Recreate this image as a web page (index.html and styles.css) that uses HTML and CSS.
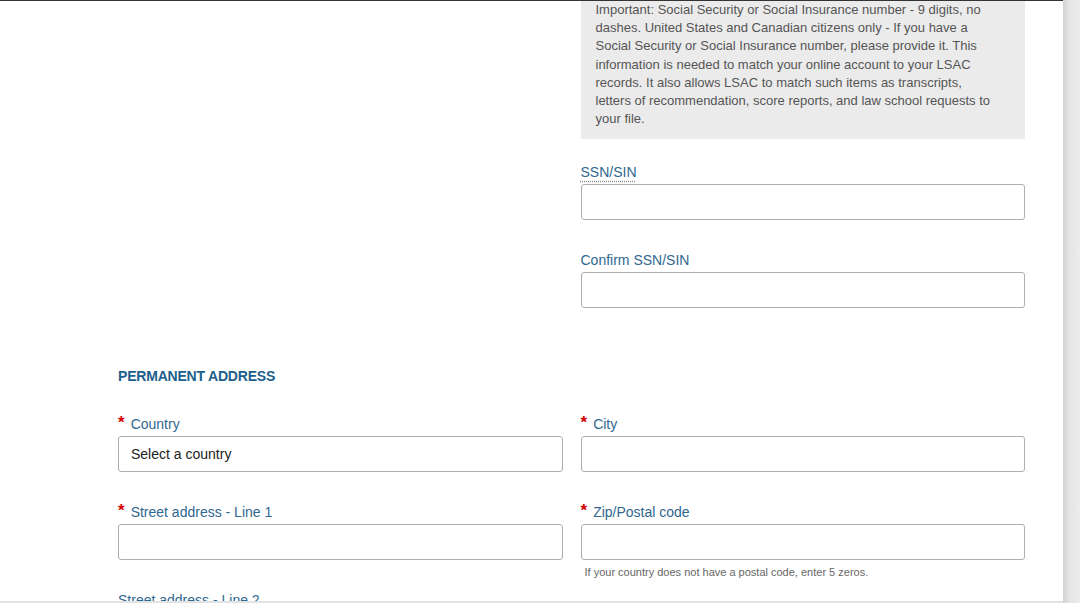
FILE: index.html
```html
<!DOCTYPE html>
<html lang="en">
<head>
    <meta charset="UTF-8">
    <meta name="viewport" content="width=device-width, initial-scale=1.0">
    <title>Account Information</title>
    <link rel="stylesheet" href="styles.css">
</head>
<body>
    <div class="page">
        <div class="page-content">
            <form class="account-form">
                <div class="form-row">
                    <div class="form-col"></div>
                    <div class="form-col">
                        <div class="info-box">
                            <p>Important: Social Security or Social Insurance number - 9 digits, no dashes. United States and Canadian citizens only - If you have a Social Security or Social Insurance number, please provide it. This information is needed to match your online account to your LSAC records. It also allows LSAC to match such items as transcripts, letters of recommendation, score reports, and law school requests to your file.</p>
                        </div>
                        <div class="form-group">
                            <label for="ssn"><abbr title="Social Security Number / Social Insurance Number">SSN/SIN</abbr></label>
                            <input type="text" id="ssn" maxlength="9">
                        </div>
                        <div class="form-group">
                            <label for="ssn-confirm">Confirm SSN/SIN</label>
                            <input type="text" id="ssn-confirm" maxlength="9">
                        </div>
                    </div>
                </div>

                <h3 class="section-title">Permanent Address</h3>

                <div class="form-row">
                    <div class="form-col">
                        <div class="form-group">
                            <label for="country"><span class="required">*</span>Country</label>
                            <div class="select-box" id="country">Select a country</div>
                        </div>
                        <div class="form-group">
                            <label for="street1"><span class="required">*</span>Street address - Line 1</label>
                            <input type="text" id="street1">
                        </div>
                        <div class="form-group">
                            <label for="street2">Street address - Line 2</label>
                            <input type="text" id="street2">
                        </div>
                    </div>
                    <div class="form-col">
                        <div class="form-group">
                            <label for="city"><span class="required">*</span>City</label>
                            <input type="text" id="city">
                        </div>
                        <div class="form-group">
                            <label for="zip"><span class="required">*</span>Zip/Postal code</label>
                            <input type="text" id="zip">
                            <div class="help-text">If your country does not have a postal code, enter 5 zeros.</div>
                        </div>
                    </div>
                </div>
            </form>
        </div>
        <div class="side-shadow"></div>
    </div>
</body>
</html>
```

FILE: styles.css
```css
html, body {
    margin: 0;
    padding: 0;
}

body {
    font-family: 'Liberation Sans', Arial, sans-serif;
    background-color: #ffffff;
    color: #333333;
    overflow: hidden;
}

.page {
    display: flex;
    height: 603px;
}

.page-content {
    width: 1063px;
    height: 603px;
    box-sizing: border-box;
    border-top: 1px solid #333333;
    border-bottom: 2px solid #e2e2e2;
    overflow: hidden;
}

.side-shadow {
    flex: 1;
    background: linear-gradient(to right, #d2d2d2, #e4e4e4 35%, #ececec);
}

.account-form {
    width: 907px;
    margin-left: 118px;
}

.form-row {
    display: grid;
    grid-template-columns: 1fr 1fr;
    column-gap: 18px;
}

.info-box {
    background-color: #ebebeb;
    padding: 0 33px 11px 15px;
    margin-bottom: 23px;
}

.info-box p {
    margin: 0;
    font-size: 13px;
    line-height: 1.4;
    color: #555555;
}

.form-group {
    margin-bottom: 30px;
}

label {
    display: block;
    font-size: 14px;
    line-height: 20px;
    color: #2f6790;
    margin-bottom: 2px;
}

abbr {
    text-decoration: underline dotted #8a8a8a;
    text-underline-offset: 3px;
}

.required {
    color: #d40000;
    font-size: 17px;
    font-weight: bold;
    line-height: 1;
    vertical-align: top;
    margin-right: 6px;
}

input,
.select-box {
    display: block;
    width: 100%;
    height: 36px;
    box-sizing: border-box;
    padding: 0 12px;
    border: 1px solid #aeaeae;
    border-radius: 3px;
    background-color: #ffffff;
    font-family: inherit;
    font-size: 14px;
    color: #222222;
    outline: none;
}

.select-box {
    line-height: 34px;
}

input:focus {
    border-color: #2f6790;
}

.help-text {
    font-size: 11px;
    color: #666666;
    margin-top: 6px;
    padding-left: 4px;
}

.section-title {
    margin: 30px 0 29px;
    font-size: 14px;
    line-height: 17px;
    font-weight: bold;
    text-transform: uppercase;
    letter-spacing: -0.2px;
    color: #1d5f8c;
}
```
